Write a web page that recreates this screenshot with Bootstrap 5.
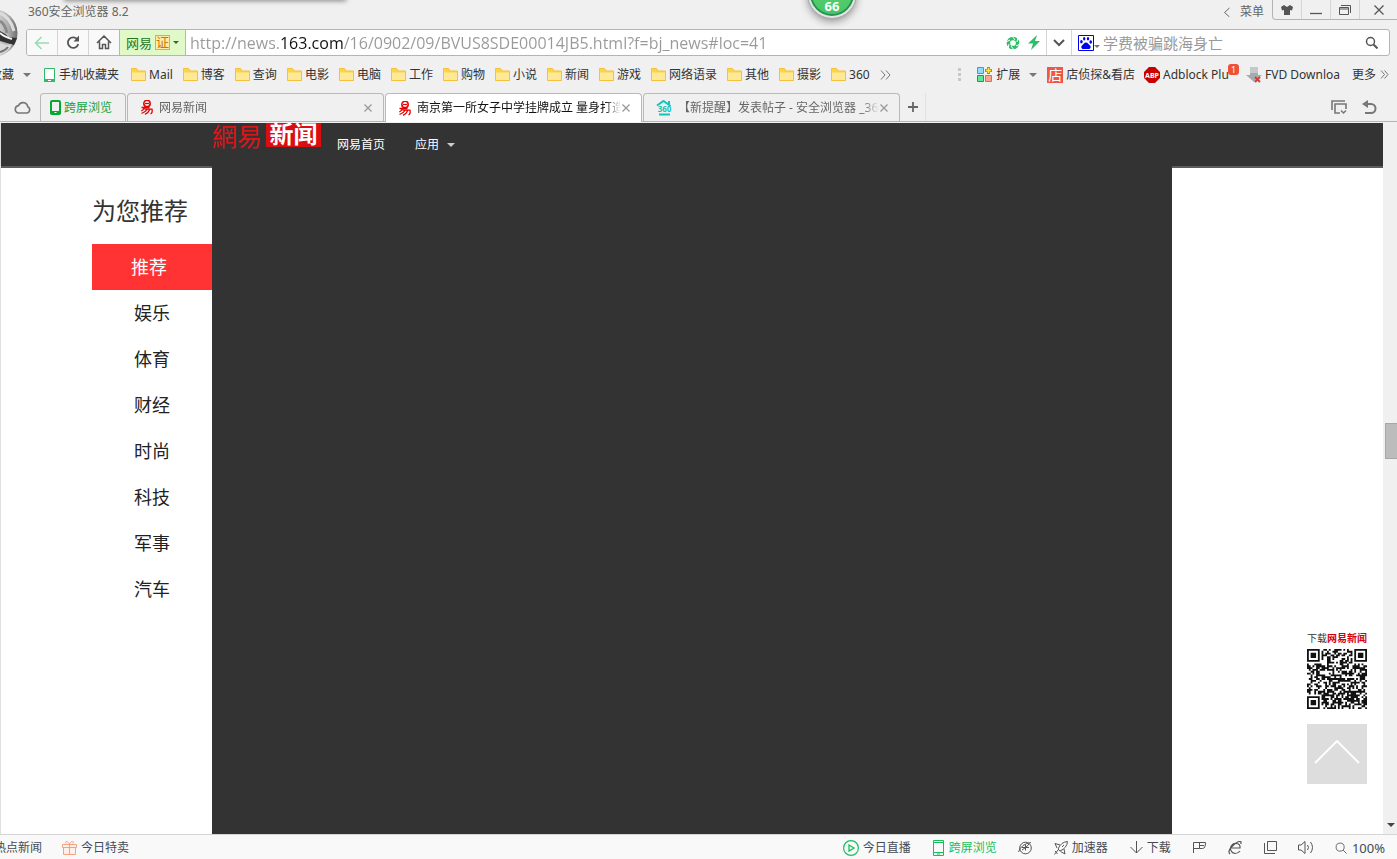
<!DOCTYPE html>
<html lang="zh-CN">
<head>
<meta charset="utf-8">
<meta name="viewport" content="width=device-width, initial-scale=1">
<title>360安全浏览器 8.2</title>
<link href="https://cdn.jsdelivr.net/npm/bootstrap@5.3.0/dist/css/bootstrap.min.css" rel="stylesheet">
<style>
body{font:12px/16px "Noto Sans","Noto Sans CJK SC",sans-serif;color:#333;background:#f0f0f0}
a{color:inherit;text-decoration:none}
button{background:none;border:0;padding:0;color:inherit;display:flex;align-items:center;justify-content:center}
svg{display:block;flex:none}
.line{fill:none;stroke:currentColor}
.titlebar{height:29px;padding-left:28px;color:#666}
.win-shadow{position:absolute;left:65px;top:-10px;width:280px;height:10px;box-shadow:0 0 5px 1px #888}
.avatar{position:absolute;left:-30px;top:9px;z-index:2}
.speed-ball{position:absolute;left:808px;top:-30px;width:48px;height:48px;border-radius:50%;border:2px solid #e3e3e3;outline:1px solid #aaa;background:linear-gradient(#5bd873,#49c465);box-shadow:0 3px 8px #888,inset 0 0 0 2px #259153;color:#fff;font-size:13px;line-height:16px;font-weight:700;padding-top:26px;text-align:center;z-index:3}
.menu-link{height:24px;gap:9px;margin-right:8px}
.win-ctl{height:20px;border:1px solid #b4b4b4;border-width:0 0 1px 1px;border-radius:0 0 0 4px;color:#555}
.win-ctl button{width:29px;border-right:1px solid #d5d5d5}
.win-ctl button:last-child{width:37px;border:0}
.addr{height:27px;margin:0 7px 0 26px;border:1px solid #b4b4b4;border-radius:3px;background:#fff;overflow:hidden}
.addr input{border:0;outline:0;min-width:0;padding:0;font-size:15px;background:transparent}
.nav-key{width:31px;background:#f9f9f9;border-right:1px solid #d5d5d5;color:#555}
.cert{width:67px;margin:-1px 4px -1px -1px;background:#e1f9c9;border:1px solid #97d85f;color:#22751b;font-size:13px;gap:3px}
.cert-mark{font-size:13px;line-height:13px;color:#c47a08;background:#ffeaa8;border:1px solid #efa72c;width:15px;height:15px;display:flex;justify-content:center;align-items:center}
.addr .url-box{font-family:"Open Sans",sans-serif;font-size:16px;line-height:24px;-webkit-text-fill-color:transparent;background-image:linear-gradient(90deg,#999 0 90px,#111 90px 154px,#999 154px);-webkit-background-clip:text;background-clip:text}
.tri{width:0;height:0;border:4px solid transparent;border-top-color:#777;border-bottom:0}
.chev{width:26px;border:1px solid #d5d5d5;border-width:0 1px;color:#555}
.find{width:317px;padding:0 11px 0 6px}
.find input::placeholder{color:#999}
.marks{height:37px;padding-right:8px;white-space:nowrap;overflow:hidden}
.mark-item{display:flex;align-items:center;gap:3px;margin-right:10px}
.fav-cut{margin-left:-10px;margin-right:9px;gap:9px}
.tool-item{display:flex;align-items:center;gap:3px;margin-right:9px;position:relative}
.w-abp{width:70px}.w-fvd{width:78px}
.count{position:absolute;left:84px;top:-3px;width:11px;height:11px;border-radius:3px;background:#ee5138;color:#fff;font-size:9px;line-height:11px;text-align:center}
.dian{width:16px;height:16px;background:#f05545;color:#fff;font-size:14px;line-height:15px;text-align:center}
.tabs{height:29px;border-bottom:1px solid #b4b4b4}
.tab-x{height:28px;border:1px solid #b9b9b9;border-bottom:0;border-radius:4px 4px 0 0;margin-right:1px;color:#666}
.tab-wide{width:257px;padding:0 10px 0 12px;gap:5px}
.tab-wide .txt{flex:1;white-space:nowrap;overflow:hidden;-webkit-mask:linear-gradient(90deg,#000 92%,transparent);text-align:left;margin-right:-5px}
.tab-on{height:29px;background:#fff;color:#111;margin-bottom:-1px}
.tab-tools{gap:14px;padding-right:20px;color:#777}
.shut{color:#999;width:10px}
.view{border-left:1px solid #e0e0e0;margin-top:1px;background:#fff;min-height:0}
.mast{height:45px;background:#333;color:#fff}
.edge{border-bottom:2px solid #5f5b5d}
.wing{flex:1 0 0}
.mid{width:960px;flex:none}
.brand-a{color:#d8171b;font-size:25px;line-height:24px;width:54px;font-family:"Noto Sans CJK TC",sans-serif}
.brand-b{background:#d90e10;color:#fff;font-size:24px;line-height:24px;width:55px;height:24px;font-weight:700;text-align:center;font-family:"Liberation Serif","Noto Sans CJK SC",serif}
.mast-link{padding-top:14px}
.side{width:120px}
.side h1{font-size:24px;line-height:32px;margin:27px 0 17px;font-weight:400;color:#333}
.side a{display:block;height:46px;line-height:46px;font-size:18px;text-align:center;color:#222}
.side a.on{background:#f33;color:#fff;padding-right:6px}
.float-box{width:60px;margin:462px 16px 0 0}
.float-box p{font-size:10px;line-height:16px;margin:0 0 3px;white-space:nowrap;color:#333}
.float-box b{color:#d7000f}
.to-top{width:60px;height:60px;background:#ddd;margin-top:15px}
.scroll{width:14px;background:#f0f0f0;padding:7px 0 7px 2px}
.thumb{height:36px;border:1px solid #a6a6a6;background:#bcbcbc;margin-right:-1px}
.foot{height:25px;background:#f9f9f9;border-top:1px solid #d5d5d5;color:#444b55;white-space:nowrap;overflow:hidden;padding:1px 12px 0 0}
.foot a{display:flex;align-items:center;gap:4px}
.foot svg{color:#555}
.foot .zoom-pct{font-size:13px}
.foot .grn,.foot .grn svg,.foot svg.grn{color:#19bf5f}
</style>
</head>
<body class="vh-100 d-flex flex-column overflow-hidden">
<svg width="0" height="0" class="position-absolute" aria-hidden="true">
<defs>
<symbol id="folder" viewBox="0 0 15 13"><path d="M.5 12.500V.5h5l1.500 2.500h7.500v9.500z" fill="#fbd549" stroke="#f3c13c"/><path d="M1 4.500h13V12H1z" fill="#ffe896"/></symbol>
<symbol id="cross" viewBox="0 0 10 10"><path class="line" d="M1.500 1.500l7 7m0-7l-7 7" stroke-width="1.300"/></symbol>
<symbol id="yi" viewBox="0 0 13 15"><g fill="none" stroke="#e60000"><circle cx="6.500" cy="3.500" r="3.200" stroke-width="1.500"/><path d="M4.500 3.500h4" stroke-width="1.200"/><path d="M1 7.500h8M4 7.500Q3 10 .8 11M4 9.200h7.500q.8 4-1.500 4.800M6.500 9.500Q5 12 1 13.500M9.200 9.500Q8 13 4.500 14.300" stroke-width="1.300"/></g></symbol>
<symbol id="lens" viewBox="0 0 14 14"><circle class="line" cx="6" cy="6" r="4.700"/><path class="line" d="M9.500 9.500l4 4"/></symbol>
</defs>
</svg>
<div class="win-shadow"></div>
<svg class="avatar" width="49" height="49" viewBox="0 0 49 49"><defs><linearGradient id="av" x1="0" x2="1"><stop offset=".62" stop-color="#c9c9c9"/><stop offset=".8" stop-color="#b0b0b0"/><stop offset="1" stop-color="#6d6d6d"/></linearGradient></defs><circle cx="24" cy="24" r="23.500" fill="url(#av)"/><path d="M30 4q10 4 14 18" stroke="#ddd" stroke-width="3" fill="none"/><path d="M30 12q5 3 7 12" stroke="#8a8a8a" stroke-width="3" fill="none"/><path d="M30 22q5 2 8 6l9 1-3 7-14-4z" fill="#333"/><path d="M30 24q4 4 12 6" stroke="#f5f5f5" stroke-width="2" fill="none"/><path d="M30 34q6 3 12 1-3 8-12 11z" fill="#d9d9d9"/><path d="M30 43q5-1 8-5" stroke="#777" stroke-width="2" fill="none"/></svg>
<div class="speed-ball">66</div>

<header>
  <div class="titlebar d-flex justify-content-between">
    <span class="pt-1">360安全浏览器 8.2</span>
    <div class="d-flex">
      <button class="menu-link"><svg width="8" height="10"><path class="line" d="M6.500 1L1.500 5.500l5 4.500"/></svg>菜单</button>
      <div class="win-ctl d-flex">
        <button aria-label="皮肤"><svg width="12" height="10"><path d="M3 0l3 2 3-2 3 2-1 3.500-2-.5v5H3V5l-2 .5L0 2z" fill="#555"/></svg></button>
        <button aria-label="最小化"><svg width="12" height="10"><path class="line" d="M0 8.500h12" stroke-width="1.300"/></svg></button>
        <button aria-label="还原"><svg width="12" height="10"><path class="line" d="M.5 2.500h9v7h-9zM2 .5h9.500V8M1 4h8"/></svg></button>
        <button aria-label="关闭"><svg width="10" height="10"><path class="line" d="M.5.5l9 9m0-9l-9 9" stroke-width="1.300"/></svg></button>
      </div>
    </div>
  </div>

  <form class="addr d-flex align-items-stretch" onsubmit="return false">
    <button class="nav-key" aria-label="后退"><svg width="16" height="14" style="color:#98dbb5"><path class="line" d="M15 7H1.500M7.500 1l-6 6 6 6" stroke-width="1.600"/></svg></button>
    <button class="nav-key" aria-label="刷新"><svg width="14" height="15"><path class="line" d="M11.500 4.500A5.300 5.300 0 1 0 12.300 9" stroke-width="1.800"/><path d="M13 .5v6H7.500z" fill="#555"/></svg></button>
    <button class="nav-key" aria-label="主页"><svg width="16" height="15"><path class="line" d="M1 8l7-7 7 7M3.500 6.500v7h3V9.500h3v4h3v-7" stroke-width="1.500"/></svg></button>
    <button class="cert">网易 <span class="cert-mark">证</span><span class="tri" style="border-width:3px 3px 0;border-top-color:#22751b"></span></button>
    <input class="url-box flex-grow-1" aria-label="地址栏" value="http://news.163.com/16/0902/09/BVUS8SDE00014JB5.html?f=bj_news#loc=41">
    <div class="d-flex align-items-center gap-2 ps-2" style="padding-right:6px">
      <svg width="14" height="14" viewBox="0 0 14 14"><circle cx="7" cy="7" r="4.600" fill="none" stroke="#2ebd68" stroke-width="3.500"/><path d="M6 0l3 4M12 1l-1 5M14 8l-4 2M8 14l-3-4M2 13l1-5M0 6l4-2" stroke="#fff" stroke-width="1"/></svg>
      <svg width="12" height="15" viewBox="0 0 12 15"><path d="M9 0L0 8.500h5L3 15l9-9H7z" fill="#2ebd68"/></svg>
    </div>
    <button class="chev" aria-label="展开"><svg width="12" height="8"><path class="line" d="M1 1l5 5 5-5" stroke-width="2"/></svg></button>
    <div class="find d-flex align-items-center">
      <svg width="16" height="16" viewBox="0 0 16 16"><path d="M.5.5h15v15H.5z" fill="#fff" stroke="#0000e8"/><g fill="#0000e8"><ellipse cx="3.400" cy="6.800" rx="1.300" ry="1.700"/><ellipse cx="6.200" cy="3.700" rx="1.200" ry="1.700"/><ellipse cx="10" cy="3.700" rx="1.200" ry="1.700"/><ellipse cx="12.700" cy="7" rx="1.300" ry="1.700"/><path d="M8 7.500c2 0 2.500 2 4 3 1.500 1.500.5 3.500-1.500 3.500h-5C3.500 14 2.500 12 4 10.500 5.500 9.500 6 7.500 8 7.500z"/></g></svg>
      <span class="tri mt-2" style="border-width:3px 3px 0"></span>
      <input class="flex-grow-1" style="margin-left:3px" aria-label="搜索" placeholder="学费被骗跳海身亡">
      <button aria-label="搜索按钮"><svg width="13" height="13" style="color:#555"><circle class="line" cx="5.500" cy="5.500" r="4" stroke-width="1.500"/><path class="line" d="M8.500 8.500l4 4" stroke-width="2"/></svg></button>
    </div>
  </form>

  <nav class="marks d-flex align-items-center justify-content-between" aria-label="收藏栏">
    <div class="d-flex align-items-center" id="markList">
      <a href="#" class="mark-item fav-cut">收藏<span class="tri"></span></a>
      <a href="#" class="mark-item gap-1 ms-1 me-2 pe-1"><svg width="11" height="14"><path d="M.5.5h10v13H.5z" fill="#fff" stroke="#30b96b"/><path d="M0 11h11v3H0z" fill="#30b96b"/><path d="M4 12.500h3" stroke="#fff"/></svg>手机收藏夹</a>
    </div>
    <div class="d-flex align-items-center">
      <svg class="me-3" width="3" height="13" fill="#c8c8c8"><path d="M0 0h3v3H0zM0 5h3v3H0zM0 10h3v3H0z"/></svg>
      <a href="#" class="tool-item"><svg width="16" height="15"><path d="M.5.5h6v6h-6z" fill="#8bdcff" stroke="#379edb"/><path d="M.5 8.500h6v6h-6z" fill="#62e49a" stroke="#12a34a"/><path d="M8.500 8.500h6v6h-6z" fill="#ffa68e" stroke="#e4694f"/><path d="M11.500 0v7M8 3.500h7" stroke="#b78a00" stroke-width="3"/><path d="M11.500 1v5M9 3.500h5" stroke="#ffe635" stroke-width="1.500"/></svg>扩展</a>
      <span class="tri" style="margin-right:10px"></span>
      <a href="#" class="tool-item"><span class="dian">店</span>店侦探&amp;看店</a>
      <a href="#" class="tool-item"><svg width="16" height="16"><path d="M5 0h6l5 5v6l-5 5H5l-5-5V5z" fill="#c90000"/><text x="8" y="11" text-anchor="middle" font-size="7" font-weight="700" fill="#fff">ABP</text></svg><span class="w-abp">Adblock Plu</span><span class="count">1</span></a>
      <a href="#" class="tool-item ms-1"><svg width="16" height="16"><path d="M4 0h8v8h4l-8 7-8-7h4z" fill="#a7abae"/><path d="M4 0h8v6H4z" fill="#c6c9cb"/><path d="M9 10l5 5m0-5l-5 5" stroke="#e03a35" stroke-width="2"/></svg><span class="w-fvd">FVD Downloa</span></a>
      <a href="#" class="d-flex align-items-center gap-1">更多<svg width="9" height="9" style="color:#777"><path class="line" d="M1 .5l3.500 4L1 8.500m3.500-8l3.500 4-3.500 4"/></svg></a>
    </div>
  </nav>

  <div class="tabs d-flex align-items-end" role="tablist">
    <button class="h-100 ps-3 me-1" style="width:36px;color:#777" aria-label="云"><svg class="me-2" width="17" height="13"><path class="line" d="M4 12h8.500a3.300 3.300 0 0 0 1.200-6.300A4.800 4.800 0 0 0 4.500 4.600 3.800 3.800 0 0 0 4 12z" stroke-width="1.600"/></svg></button>
    <button class="tab-x pe-1" style="width:86px;gap:3px;color:#16a341" role="tab"><svg width="11" height="15"><rect x="1" y="1" width="9" height="13" rx="1" fill="none" stroke="#04a92d" stroke-width="2"/><path d="M0 11h11v3H0z" fill="#04a92d"/><path d="M4.500 12.500h2" stroke="#fff"/></svg>跨屏浏览</button>
    <button class="tab-x tab-wide" role="tab"><svg width="14" height="15"><use href="#yi"/></svg><span class="txt">网易新闻</span><svg class="shut" height="10"><use href="#cross"/></svg></button>
    <button class="tab-x tab-wide tab-on" role="tab" aria-selected="true"><svg width="14" height="15"><use href="#yi"/></svg><span class="txt">南京第一所女子中学挂牌成立 量身打造</span><svg class="shut" height="10"><use href="#cross"/></svg></button>
    <button class="tab-x tab-wide" role="tab"><svg width="17" height="16"><path d="M1 5.500L7.500 1l7 5M13 1v3" fill="none" stroke="#12c4bb" stroke-width="2"/><path d="M3 14.500h11" stroke="#12c4bb" stroke-width="2"/><text x="8.500" y="12" text-anchor="middle" font-size="8" font-weight="700" fill="#12c4bb">360</text></svg><span class="txt">【新提醒】发表帖子 - 安全浏览器 _360</span><svg class="shut" height="10"><use href="#cross"/></svg></button>
    <button class="h-100 border-end" style="width:25px" aria-label="新标签"><svg width="10" height="10" style="color:#666"><path class="line" d="M5 0v10M0 5h10" stroke-width="1.800"/></svg></button>
    <div class="tab-tools ms-auto h-100 d-flex align-items-center">
      <svg width="17" height="15"><path class="line" d="M1 10V1h13M9 13H4V4h11v5" stroke-width="1.600"/><path class="line" d="M10 10.500l2.500 2.500 2.500-2.500" stroke-width="1.500"/></svg>
      <svg width="15" height="14"><path class="line" d="M4 4h5a4.300 4.300 0 0 1 0 9H3" stroke-width="2"/><path d="M0 4l6-4v8z" fill="#777"/></svg>
    </div>
  </div>
</header>

<div class="view flex-grow-1 d-flex">
  <div class="flex-grow-1 d-flex flex-column">
    <div class="mast d-flex">
      <div class="edge wing"></div>
      <nav class="mid d-flex">
        <a href="#" class="d-flex"><span class="brand-a">網易</span><span class="brand-b">新闻</span></a>
        <a href="#" class="mast-link ms-3">网易首页</a>
        <a href="#" class="mast-link d-flex" style="margin-left:30px;gap:8px">应用<span class="tri" style="margin-top:6px;border-top-color:#ccc"></span></a>
      </nav>
      <div class="edge wing"></div>
    </div>
    <main class="d-flex flex-grow-1">
      <div class="wing d-flex justify-content-end">
        <nav class="side"><h1>为您推荐</h1><a href="#" class="on">推荐</a><a href="#">娱乐</a><a href="#">体育</a><a href="#">财经</a><a href="#">时尚</a><a href="#">科技</a><a href="#">军事</a><a href="#">汽车</a></nav>
      </div>
      <div class="mid" style="background:#333"></div>
      <div class="wing d-flex justify-content-end">
        <aside class="float-box"><p>下载<b>网易新闻</b></p><svg id="qr" width="60" height="60" viewBox="0 0 33 33" role="img" aria-label="二维码"></svg>
        <button class="to-top" aria-label="返回顶部"><svg width="46" height="24" style="color:#fff;margin-bottom:4px"><path class="line" d="M1 23L23 1l22 22" stroke-width="2"/></svg></button></aside>
      </div>
    </main>
  </div>
  <div class="scroll d-flex flex-column align-items-stretch">
    <span class="tri align-self-center" style="border-width:0 4px 4px;border-bottom-color:#444;border-top-color:transparent"></span>
    <div style="flex:290"></div><div class="thumb"></div><div style="flex:360"></div>
    <span class="tri align-self-center" style="border-top-color:#444"></span>
  </div>
</div>

<footer class="foot d-flex align-items-center">
  <a href="#" style="margin-left:-6px;margin-right:20px">热点新闻</a>
  <a href="#"><svg width="15" height="14"><path d="M.5 3.500h14v3H.5zM1.500 6.500h12v7h-12zM7.500 3.500v10" fill="#fff1ea" stroke="#f5a27f"/><path d="M7.500 3C5-1 3 0 4 2.500M7.500 3C10-1 12 0 11 2.500" fill="none" stroke="#f5a27f"/></svg>今日特卖</a>
  <a href="#" class="ms-auto"><svg class="grn" width="16" height="16"><circle class="line" cx="8" cy="8" r="7.400" stroke-width="1.200"/><path class="line" d="M6 5l5 3-5 3z" stroke-width="1.300"/></svg>今日直播</a>
  <a href="#" class="grn" style="margin-left:22px;gap:5px"><svg width="11" height="16"><path class="line" d="M.5.5h10v15H.5zM.5 2.500h10M.5 12.500h10M4 14h3"/></svg>跨屏浏览</a>
  <a href="#" style="margin-left:21px" aria-label="无痕"><svg width="14" height="14"><circle class="line" cx="7.500" cy="7" r="5.800"/><path class="line" d="M.5 11Q3 3 13 1.500M4 6.500h7M7.500 3.500v6M4 9Q9 6 11 3"/></svg></a>
  <a href="#" style="margin-left:22px"><svg width="14" height="14"><path class="line" d="M13.500.5Q7 1 4 8l2 2Q13 7 13.500.5zM6 4L1 2.500 3 7M10 8l1 5-4.500-2.500M4 9l-3.500 4.500M1 10l2.500 3M8 6l2-2"/></svg>加速器</a>
  <a href="#" style="margin-left:22px"><svg width="13" height="13"><path class="line" d="M6.500 0v12M.5 6l6 6 6-6"/></svg>下载</a>
  <a href="#" style="margin-left:21px" aria-label="工具"><svg width="14" height="12"><path class="line" d="M1.500 11V.5h12q0 6-3 6h-3V.5M1.500 6.500h6M8 3.500h4"/></svg></a>
  <a href="#" style="margin-left:22px" aria-label="内核"><svg width="14" height="14"><path class="line" d="M3.500 7h8.500q.5-4.500-4-4.500a5 5 0 0 0-1 10q3 0 5-2.500M2 13Q-1 10 5 4.500T13 1v2" stroke-width="1.200"/></svg></a>
  <a href="#" style="margin-left:22px" aria-label="窗口"><svg width="13" height="13"><path class="line" d="M3.500.5h9v9h-9zM.5 2v10.500H11"/></svg></a>
  <a href="#" style="margin-left:21px" aria-label="声音"><svg width="16" height="13"><path class="line" d="M.5 4v5h2.500l4 3.500v-12L3 4zM9.500 4q2 2.500 0 5M12.500 1q4 5.500 0 11"/></svg></a>
  <a href="#" class="zoom-pct" style="margin-left:21px;gap:5px"><svg width="12" height="12" viewBox="0 0 14 14"><use href="#lens"/></svg>100%</a>
</footer>

<script src="https://cdn.jsdelivr.net/npm/bootstrap@5.3.0/dist/js/bootstrap.bundle.min.js"></script>
<script>
const list = document.getElementById('markList');
['Mail','博客','查询','电影','电脑','工作','购物','小说','新闻','游戏','网络语录','其他','摄影','360'].forEach(n =>
  list.insertAdjacentHTML('beforeend', `<a href="#" class="mark-item"><svg width="15" height="13"><use href="#folder"/></svg>${n}</a>`));
list.insertAdjacentHTML('beforeend', '<svg width="11" height="10" style="color:#777"><path class="line" d="M1 .5L5 5 1 9.500M6 .5L10 5 6 9.500"/></svg>');
// QR modules: three finder squares plus a scattered data area
let d = '', seed = 163;
const finder = (x, y) => { const m = Math.max(Math.abs(x - 3), Math.abs(y - 3)); return m < 2 || m === 3; };
for (let y = 0; y < 33; y++) for (let x = 0; x < 33; x++) {
  seed = (seed * 16807) % 2147483647;
  let on = seed / 2147483647 < .54;
  if (x < 8 && y < 8) on = x < 7 && y < 7 && finder(x, y);
  if (x > 24 && y < 8) on = x > 25 && y < 7 && finder(x - 26, y);
  if (x < 8 && y > 24) on = x < 7 && y > 25 && finder(x, y - 26);
  if (on) d += `M${x} ${y}h1v1h-1z`;
}
document.getElementById('qr').innerHTML = `<path d="${d}" fill="#111"/>`;
</script>
</body>
</html>
